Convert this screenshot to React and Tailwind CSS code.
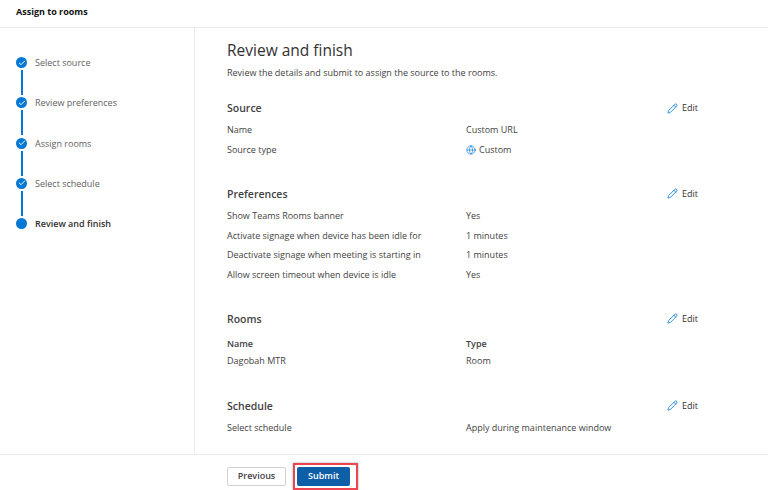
import { Check, Globe, Pencil } from 'lucide-react';

const steps = ['Select source', 'Review preferences', 'Assign rooms', 'Select schedule', 'Review and finish'];

function Step({ label, index }) {
  const last = index === steps.length - 1;
  return (
    <div className="flex gap-[8px] h-[40.25px]">
      <div className="flex flex-col items-center w-[11px]">
        <div className="w-[11px] h-[11px] shrink-0 rounded-full bg-[#0078d4] flex items-center justify-center">
          {!last && <Check size={8} strokeWidth={3} className="text-white" />}
        </div>
        {!last && <div className="w-[2px] h-[25px] mt-[2px] bg-[#0078d4]" />}
      </div>
      <div className={last ? 'text-[9px] leading-[11px] font-semibold text-[#323130]' : 'text-[9px] leading-[11px] text-[#616161]'}>
        {label}
      </div>
    </div>
  );
}

function SectionHead({ title, className }) {
  return (
    <div className={`flex items-center justify-between h-[16px] ${className}`}>
      <div className="text-[10.5px] font-semibold text-[#424242]">{title}</div>
      <div className="flex items-center justify-end gap-[4px] mb-[2px] text-[9px] text-[#323130]">
        <Pencil size={11} strokeWidth={1.75} className="text-[#0078d4] shrink-0" />
        <span>Edit</span>
      </div>
    </div>
  );
}

function Row({ name, value, bold, className }) {
  return (
    <div className={`flex items-center h-[19.8px] text-[9px] text-[#424242] ${bold ? 'font-semibold' : ''} ${className || ''}`}>
      <div className="w-[239px] shrink-0">{name}</div>
      <div className="flex items-center gap-[3px]">{value}</div>
    </div>
  );
}

export default function App() {
  return (
    <div className="w-[768px] h-[490px] flex flex-col bg-white overflow-hidden font-['Open_Sans',sans-serif]">
      <div className="h-[28px] shrink-0 border-b border-[#ebebeb] pl-[16px] flex items-center text-[9px] font-bold text-[#111111] pb-[3px]">
        Assign to rooms
      </div>
      <div className="flex flex-1 min-h-0">
        <div className="w-[195px] shrink-0 border-r border-[#ebebeb] pl-[16px] pt-[29px]">
          {steps.map((s, i) => (
            <Step key={s} label={s} index={i} />
          ))}
        </div>
        <div className="w-[471px] ml-[32px] pt-[9px]">
          <h1 className="text-[15.5px] leading-[26px] font-medium text-[#323130]">Review and finish</h1>
          <p className="text-[9px] leading-[13px] mt-[3px] text-[#424242]">
            Review the details and submit to assign the source to the rooms.
          </p>

          <SectionHead title="Source" className="mt-[22px]" />
          <Row name="Name" value="Custom URL" className="mt-[3px]" />
          <Row
            name="Source type"
            value={
              <>
                <Globe size={10} strokeWidth={1.5} className="text-[#0078d4]" />
                Custom
              </>
            }
          />

          <SectionHead title="Preferences" className="mt-[27px]" />
          <Row name="Show Teams Rooms banner" value="Yes" className="mt-[3px]" />
          <Row name="Activate signage when device has been idle for" value="1 minutes" />
          <Row name="Deactivate signage when meeting is starting in" value="1 minutes" />
          <Row name="Allow screen timeout when device is idle" value="Yes" />

          <SectionHead title="Rooms" className="mt-[27px]" />
          <Row name="Name" value="Type" bold className="mt-[6px]" />
          <Row name="Dagobah MTR" value="Room" className="-mt-[3px]" />

          <SectionHead title="Schedule" className="mt-[28px]" />
          <Row name="Select schedule" value="Apply during maintenance window" className="mt-[3px]" />
        </div>
      </div>
      <div className="h-[36px] shrink-0 border-t border-[#ebebeb] pl-[227px] pt-[7px] flex items-center gap-[7px]">
        <button className="w-[59px] h-[19px] border border-[#d1d1d1] rounded-[2px] text-[9px] font-semibold text-[#424242]">
          Previous
        </button>
        <div className="border-2 border-[#ee4550] pl-[2px] pr-[6px] py-[2px] -my-[4px] shadow-[0_0_2px_#999]">
          <button className="block w-[53px] h-[19px] bg-[#0f5ea8] rounded-[2px] text-[9px] font-semibold text-white">
            Submit
          </button>
        </div>
      </div>
    </div>
  );
}
